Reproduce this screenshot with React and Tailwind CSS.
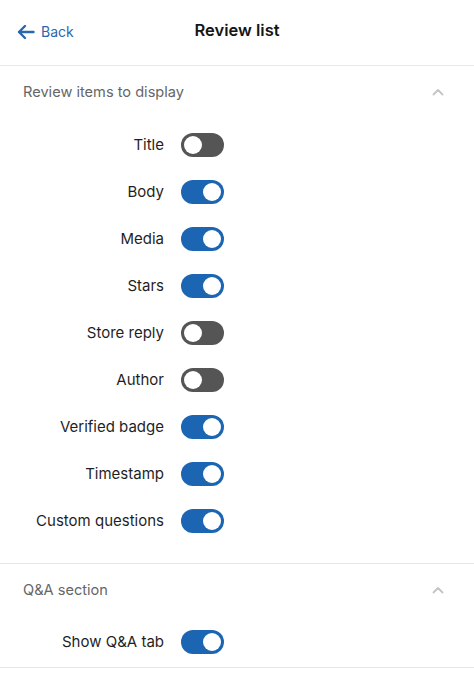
import { useState } from "react";

const items = [
    { label: "Title", on: false },
    { label: "Body", on: true },
    { label: "Media", on: true },
    { label: "Stars", on: true },
    { label: "Store reply", on: false },
    { label: "Author", on: false },
    { label: "Verified badge", on: true },
    { label: "Timestamp", on: true },
    { label: "Custom questions", on: true },
];

function Toggle({ on, onClick }) {
    return (
        <button
            onClick={onClick}
            className={`w-[43px] h-[24px] rounded-full flex items-center px-[3px] ${on ? "bg-[#1b65b2] justify-end" : "bg-[#555555] justify-start"}`}
        >
            <span className="w-[18px] h-[18px] rounded-full bg-white" />
        </button>
    );
}

function Chevron() {
    return (
        <svg width="12" height="8" viewBox="0 0 12 8" fill="none" stroke="#c4c4c4" strokeWidth="1.8" strokeLinecap="round" strokeLinejoin="round">
            <path d="M1.5 6.5 L6 2 L10.5 6.5" />
        </svg>
    );
}

function Row({ label, on, onClick }) {
    return (
        <div className="h-[47px] flex items-center">
            <span className="w-[164px] text-right text-[15px] text-[#1f1f1f] mt-[1px]">{label}</span>
            <div className="ml-[17px]">
                <Toggle on={on} onClick={onClick} />
            </div>
        </div>
    );
}

export default function App() {
    const [state, setState] = useState(items.map((i) => i.on));
    const [qa, setQa] = useState(true);

    const flip = (idx) => setState((s) => s.map((v, i) => (i === idx ? !v : v)));

    return (
        <div className="w-[474px] h-[682px] bg-white font-['Inter',sans-serif] overflow-hidden">
            <div className="h-[66px] relative flex items-center justify-center border-b border-[#e8e8e8]">
                <div className="absolute left-[17px] top-[21px] flex items-center gap-[6px] text-[#2a67ad]">
                    <svg width="18" height="16" viewBox="0 0 18 16" fill="none" stroke="#2a67ad" strokeWidth="2.4" strokeLinecap="round" strokeLinejoin="round">
                        <path d="M16.5 8 H2 M8 2 L2 8 L8 14" />
                    </svg>
                    <span className="text-[14px]">Back</span>
                </div>
                <h1 className="text-[16.5px] font-semibold text-[#151515] -mt-[4px]">Review list</h1>
            </div>

            <div className="border-b border-[#e8e8e8] pb-[19px]">
                <div className="h-[52px] flex items-center justify-between pl-[23px] pr-[30px]">
                    <span className="text-[14.6px] text-[#666666] mt-[2px]">Review items to display</span>
                    <Chevron />
                </div>
                <div className="pt-[3px]">
                    {items.map((it, i) => (
                        <Row key={it.label} label={it.label} on={state[i]} onClick={() => flip(i)} />
                    ))}
                </div>
            </div>

            <div className="border-b border-[#e8e8e8] pb-[2px]">
                <div className="h-[52px] flex items-center justify-between pl-[23px] pr-[30px]">
                    <span className="text-[14.6px] text-[#666666] mt-[2px]">Q&amp;A section</span>
                    <Chevron />
                </div>
                <div className="pt-[2px]">
                    <Row label="Show Q&A tab" on={qa} onClick={() => setQa(!qa)} />
                </div>
            </div>
        </div>
    );
}
